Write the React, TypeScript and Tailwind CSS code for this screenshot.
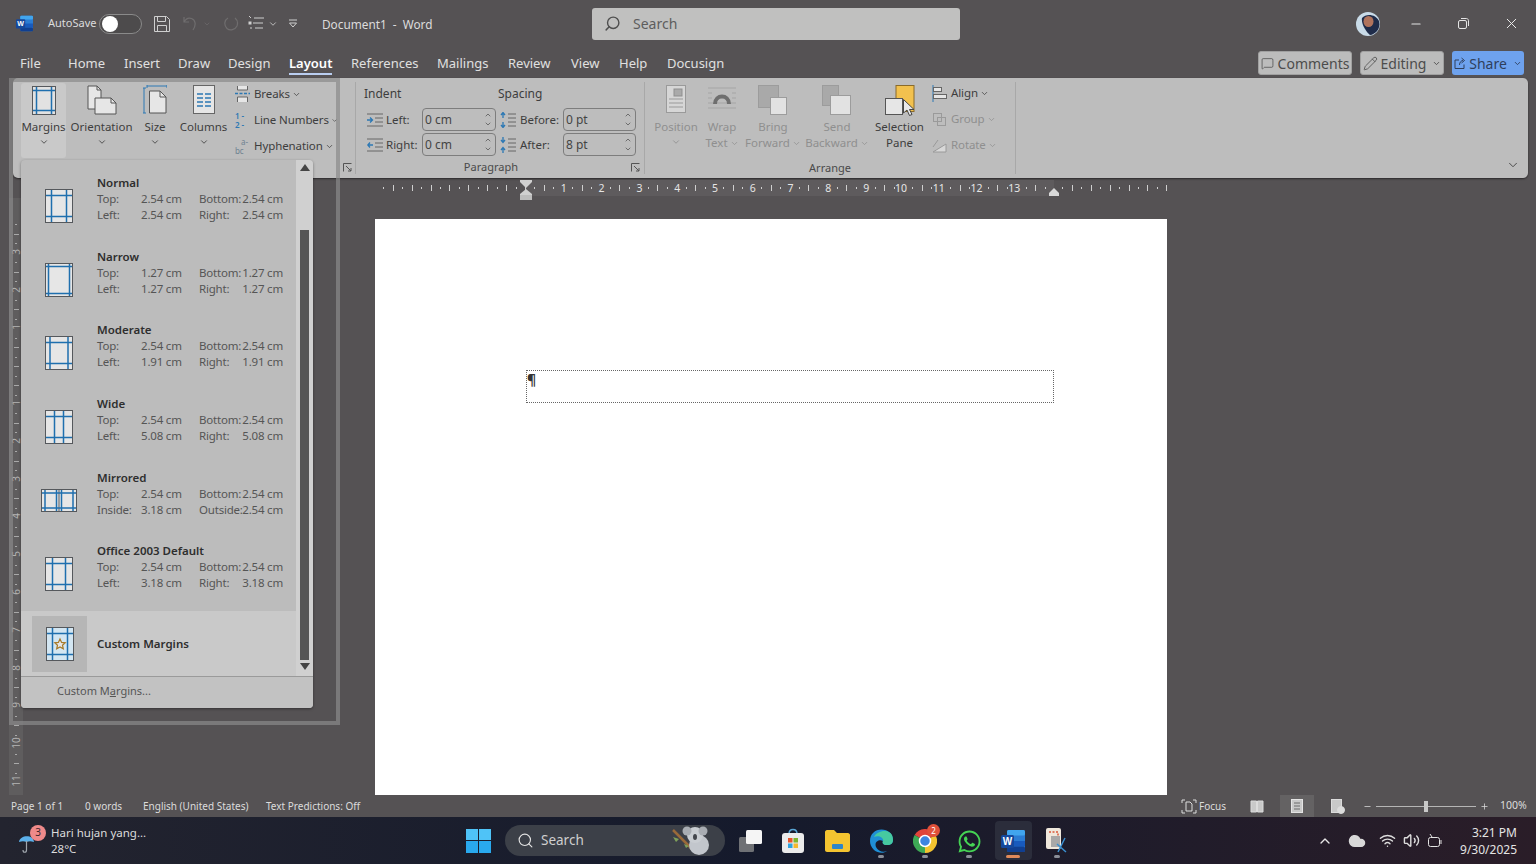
import {
  ChevronDown,
  ChevronUp,
  Minus,
  Plus,
  X,
  Search,
  MessageSquare,
  Pencil,
  Wifi,
  Volume2,
  Cloud,
} from 'lucide-react';
import { FaWhatsapp } from 'react-icons/fa';

const tabs = [
  { label: 'File', w: 'w-[48px]' },
  { label: 'Home', w: 'w-[56px]' },
  { label: 'Insert', w: 'w-[54px]' },
  { label: 'Draw', w: 'w-[50px]' },
  { label: 'Design', w: 'w-[61px]' },
  { label: 'Layout', w: 'w-[62px]' },
  { label: 'References', w: 'w-[86px]' },
  { label: 'Mailings', w: 'w-[71px]' },
  { label: 'Review', w: 'w-[63px]' },
  { label: 'View', w: 'w-[48px]' },
  { label: 'Help', w: 'w-[48px]' },
  { label: 'Docusign', w: 'w-[70px]' },
];

const margins = [
  { name: 'Normal', a: ['Top:', '2.54 cm', 'Bottom:', '2.54 cm'], b: ['Left:', '2.54 cm', 'Right:', '2.54 cm'], x: 6, y: 6 },
  { name: 'Narrow', a: ['Top:', '1.27 cm', 'Bottom:', '1.27 cm'], b: ['Left:', '1.27 cm', 'Right:', '1.27 cm'], x: 3, y: 3 },
  { name: 'Moderate', a: ['Top:', '2.54 cm', 'Bottom:', '2.54 cm'], b: ['Left:', '1.91 cm', 'Right:', '1.91 cm'], x: 4.5, y: 6 },
  { name: 'Wide', a: ['Top:', '2.54 cm', 'Bottom:', '2.54 cm'], b: ['Left:', '5.08 cm', 'Right:', '5.08 cm'], x: 9, y: 6 },
  { name: 'Mirrored', a: ['Top:', '2.54 cm', 'Bottom:', '2.54 cm'], b: ['Inside:', '3.18 cm', 'Outside:', '2.54 cm'], x: 0, y: 0 },
  { name: 'Office 2003 Default', a: ['Top:', '2.54 cm', 'Bottom:', '2.54 cm'], b: ['Left:', '3.18 cm', 'Right:', '3.18 cm'], x: 7, y: 6 },
];

function MarginIcon({ x, y, star }: { x: number; y: number; star?: boolean }) {
  return (
    <svg width="28" height="34" viewBox="0 0 28 34" fill="none">
      <rect x="0.5" y="0.5" width="27" height="33" fill={star ? '#d3e6f2' : '#e6e6e6'} stroke="#55585c" />
      <path d={`M${x + 0.5} 1V33M${27.5 - x} 1V33M1 ${y + 0.5}H27M1 ${33.5 - y}H27`} stroke="#1f6fae" strokeWidth="1.5" />
      {star && <path d="M14 12l1.6 3.4 3.6.4-2.7 2.4.8 3.6-3.3-1.9-3.3 1.9.8-3.6-2.7-2.4 3.6-.4z" fill="#e6e6e6" stroke="#a87a28" strokeWidth="1.2" />}
    </svg>
  );
}

function MirroredIcon() {
  return (
    <svg width="36" height="23" viewBox="0 0 36 23" fill="none">
      <rect x="0.5" y="0.5" width="35" height="22" fill="#e6e6e6" stroke="#55585c" />
      <path d="M18 0V23" stroke="#55585c" />
      <path d="M4 1V22M15.5 1V22M20.5 1V22M32 1V22M1 4H35M1 19H35" stroke="#1f6fae" strokeWidth="1.5" />
    </svg>
  );
}

function BigMargins() {
  return (
    <svg width="24" height="29" viewBox="0 0 24 29" fill="none">
      <rect x="0.5" y="0.5" width="23" height="28" fill="#e2e2e2" stroke="#55585c" />
      <path d="M4.5 1V28M19.5 1V28M1 4.5H23M1 24.5H23" stroke="#1f6fae" strokeWidth="1.5" />
    </svg>
  );
}

function OrientationIcon() {
  return (
    <svg width="30" height="30" viewBox="0 0 30 30" fill="none" stroke="#555">
      <path d="M1 1H10L14 5V24H1Z" fill="#e6e6e6" />
      <path d="M10 1V5H14" />
      <path d="M8 13H24L29 18V29H8Z" fill="#e6e6e6" />
      <path d="M24 13V18H29" />
    </svg>
  );
}

function SizeIcon() {
  return (
    <svg width="24" height="30" viewBox="0 0 24 30" fill="none">
      <path d="M1 3V28M0 3H3M0 28H3M4 1H24M4 0V3M24 0V3" stroke="#2c78b4" />
      <path d="M6.5 6H17L23 12V28H6.5Z" fill="#e6e6e6" stroke="#555" />
      <path d="M17 6V12H23" stroke="#555" />
    </svg>
  );
}

function ColumnsIcon() {
  return (
    <svg width="22" height="29" viewBox="0 0 22 29" fill="none">
      <rect x="0.5" y="0.5" width="21" height="28" fill="#e6e6e6" stroke="#666" />
      <path d="M4 9H10M12 9H18M4 13H10M12 13H18M4 17H10M12 17H18M4 21H10M12 21H18" stroke="#2c78b4" strokeWidth="1.3" />
    </svg>
  );
}

function BreaksIcon() {
  return (
    <svg width="15" height="16" viewBox="0 0 15 16" fill="none">
      <path d="M2.5 0V4H12.5V0M2.5 16V11H12.5V16" fill="#e6e6e6" stroke="#666" />
      <path d="M0 7.5H15" stroke="#2c78b4" strokeWidth="1.3" strokeDasharray="3 1.5" />
    </svg>
  );
}

function IndentIcon({ flip, blue = '#2c78b4' }: { flip?: boolean; blue?: string }) {
  return (
    <svg width="16" height="14" viewBox="0 0 16 14" fill="none">
      <path d="M0 1H16M8 5H16M8 9H16M0 13H16" stroke="#666" />
      <path d={flip ? 'M6 7H1M3 4.5L.8 7 3 9.5' : 'M0 7H5M3 4.5L5.5 7 3 9.5'} stroke={blue} strokeWidth="1.3" />
    </svg>
  );
}

function SpacingIcon({ inward }: { inward?: boolean }) {
  return (
    <svg width="16" height="16" viewBox="0 0 16 16" fill="none">
      <path d="M8 2H16M8 6H16M8 10H16M8 14H16" stroke="#666" />
      <path
        d={inward ? 'M3 0V5M1 3L3 5.5 5 3M3 16V11M1 13L3 10.5 5 13' : 'M3 1V6M1 3L3 .5 5 3M3 15V10M1 13L3 15.5 5 13'}
        stroke="#2c78b4"
        strokeWidth="1.3"
      />
    </svg>
  );
}

function Launcher() {
  return (
    <svg width="9" height="9" viewBox="0 0 9 9" fill="none" stroke="#555">
      <path d="M.5 8.5V.5H8.5M3 3L8 8M8 5V8H5" />
    </svg>
  );
}

function Spinner({ value, w }: { value: string; w: string }) {
  return (
    <div className={`flex h-[23px] ${w} shrink-0 items-center justify-between rounded-[4px] border border-[#7d7d7d] pl-[2px] pr-[3px] text-[12px] text-[#444]`}>
      <span>{value}</span>
      <span className="flex flex-col">
        <ChevronUp size={8} strokeWidth={2} />
        <ChevronDown size={8} strokeWidth={2} className="mt-[1px]" />
      </span>
    </div>
  );
}

function RibbonButton({
  icon,
  lines,
  w,
  off,
  chevronInline,
  noChevron,
  className = '',
}: {
  icon: React.ReactNode;
  lines: string[];
  w: string;
  off?: boolean;
  chevronInline?: boolean;
  noChevron?: boolean;
  className?: string;
}) {
  return (
    <div className={`flex ${w} shrink-0 flex-col items-center ${off ? 'text-[#8f8f8f]' : 'text-[#3d3d3d]'} ${className}`}>
      <div className="flex h-[34px] items-start justify-center">{icon}</div>
      {lines.map((line, i) => (
        <div key={line} className="flex h-[16px] items-center whitespace-nowrap text-[11.5px] leading-[16px]">
          {line}
          {chevronInline && i === lines.length - 1 && <ChevronDown size={9} strokeWidth={2} className="ml-[2px]" />}
        </div>
      ))}
      {!chevronInline && !noChevron && <ChevronDown size={10} strokeWidth={2} className="mt-[2px]" />}
    </div>
  );
}

function SideRow({ icon, label, off }: { icon: React.ReactNode; label: string; off?: boolean }) {
  return (
    <div className={`flex h-[26px] items-center whitespace-nowrap text-[11.5px] tracking-[-0.1px] ${off ? 'text-[#8f8f8f]' : 'text-[#3d3d3d]'}`}>
      <span className="flex w-[19px] shrink-0 items-center">{icon}</span>
      {label}
      <ChevronDown size={9} strokeWidth={2} className="ml-[2px]" />
    </div>
  );
}

function RulerCell({ n }: { n?: number }) {
  return (
    <div className="grid w-[37.8px] shrink-0 grid-cols-4 items-center justify-items-end">
      <span className="h-[2px] w-[1px] bg-[#cfcfcf]" />
      <span className="h-[6px] w-[1px] bg-[#cfcfcf]" />
      <span className="h-[2px] w-[1px] bg-[#cfcfcf]" />
      {n ? (
        <span className="translate-x-[3px] text-[10.5px] leading-none text-[#e6e6e6]">{n}</span>
      ) : (
        <span className="h-[6px] w-[1px] bg-[#cfcfcf]" />
      )}
    </div>
  );
}

function VRulerCell({ n }: { n?: number }) {
  return (
    <div className="grid h-[37.8px] shrink-0 grid-rows-4 items-end justify-items-center">
      <span className="h-[1px] w-[2px] bg-[#a9a9a9]" />
      <span className="h-[1px] w-[5px] bg-[#a9a9a9]" />
      <span className="h-[1px] w-[2px] bg-[#a9a9a9]" />
      {n ? (
        <span className="translate-y-[3px] -rotate-90 text-[10px] leading-none text-[#b5b5b5]">{n}</span>
      ) : (
        <span className="h-[1px] w-[5px] bg-[#a9a9a9]" />
      )}
    </div>
  );
}

function WordIcon({ size }: { size: number }) {
  return (
    <svg width={size} height={size} viewBox="0 0 24 24">
      <rect x="6" y="1" width="18" height="22" rx="2" fill="#2b7cd3" />
      <rect x="6" y="1" width="18" height="5.5" rx="1.5" fill="#41a5ee" />
      <rect x="6" y="12" width="18" height="5.5" fill="#185abd" />
      <rect x="6" y="17.5" width="18" height="5.5" rx="1.5" fill="#103f91" />
      <rect x="0" y="6" width="13" height="13" rx="1.5" fill="#15489c" />
      <text x="6.5" y="16" textAnchor="middle" fontSize="10" fontWeight="700" fill="#fff" fontFamily="Liberation Sans, sans-serif">
        W
      </text>
    </svg>
  );
}

function TaskSlot({ children, active, dot }: { children: React.ReactNode; active?: boolean; dot?: boolean }) {
  return (
    <div className="flex h-[47px] w-[44px] shrink-0 justify-center pt-[4px]">
      <div className={`flex h-[39px] w-[37px] flex-col items-center rounded-[4px] pt-[8px] ${active ? 'bg-[#2b2d3b]' : ''}`}>
        <div className="flex h-[24px] items-center justify-center">{children}</div>
        {dot && <span className={`mt-[2px] h-[3px] rounded-full ${active ? 'w-[14px] bg-[#e08a5a]' : 'w-[6px] bg-[#8b8f99]'}`} />}
      </div>
    </div>
  );
}

export default function App() {
  return (
    <div className="relative flex h-[864px] w-[1536px] flex-col overflow-hidden bg-[#555254] font-['Noto_Sans',sans-serif] text-[12px]">
      {/* Title bar */}
      <div className="flex h-[47px] shrink-0 items-center text-[#dcdcdc]">
        <div className="ml-[16px]">
          <WordIcon size={17} />
        </div>
        <span className="ml-[15px] w-[51px] text-[11px]">AutoSave</span>
        <div className="flex h-[20px] w-[43px] items-center rounded-full border border-[#8a8a8a] bg-[#4d4b4c] pl-[2px]">
          <span className="h-[16px] w-[16px] rounded-full bg-white" />
        </div>
        <svg className="ml-[12px]" width="16" height="16" viewBox="0 0 16 16" fill="none" stroke="#cfcfcf">
          <path d="M.5.5H12.5L15.5 3.5V15.5H.5Z" />
          <path d="M3.5.5V5.5H11.5V.5M3.5 15.5V9.5H12.5V15.5" />
        </svg>
        <svg className="ml-[13px]" width="15" height="15" viewBox="0 0 15 15" fill="none" stroke="#6f6d6e" strokeWidth="1.2">
          <path d="M1 1V6H6M1 6C3 2.5 6 1.5 8.5 2.5C12.5 4 13.5 9 10 14" />
        </svg>
        <ChevronDown size={8} className="ml-[5px] text-[#6f6d6e]" />
        <svg className="ml-[12px]" width="16" height="15" viewBox="0 0 16 15" fill="none" stroke="#6f6d6e" strokeWidth="1.2">
          <path d="M5 2C1.5 4 .5 9 4 12.5C7 15 12 14 14 10C15 7 14.5 4 12 2" />
        </svg>
        <svg className="ml-[9px]" width="16" height="17" viewBox="0 0 16 17" fill="none" stroke="#cfcfcf">
          <path d="M1 1L3 3M6 3H16M5 8H15M7 13H15" />
          <rect x="1" y="7" width="2" height="2" fill="#cfcfcf" />
          <path d="M2 13H4" />
        </svg>
        <ChevronDown size={10} strokeWidth={2} className="ml-[4px] text-[#cfcfcf]" />
        <svg className="ml-[10px]" width="10" height="9" viewBox="0 0 10 9" fill="none" stroke="#cfcfcf">
          <path d="M1 1H9M1.5 4L5 8 8.5 4Z" />
        </svg>
        <span className="ml-[24px] mt-[2px] w-[270px] text-[11.8px]">Document1&nbsp; -&nbsp; Word</span>
        <div className="flex h-[32px] w-[368px] items-center rounded-[3px] bg-[#c0c0bf] pl-[12px] text-[14px] text-[#5d5d5d]">
          <Search size={17} className="-scale-x-100 text-[#4e4e4e]" />
          <span className="ml-[12px]">Search</span>
        </div>
        <svg className="ml-[396px]" width="24" height="24" viewBox="0 0 24 24">
          <circle cx="12" cy="12" r="12" fill="#c9dbe8" />
          <path d="M6 6C10 1 20 2 23 9C25 16 20 22 14 23C10 20 5 12 6 6Z" fill="#1f2c4a" />
          <ellipse cx="12.5" cy="9.5" rx="5" ry="5.5" fill="#b0735c" />
        </svg>
        <Minus size={14} className="ml-[29px] text-[#e4e4e4]" />
        <svg className="ml-[35px]" width="11" height="11" viewBox="0 0 11 11" fill="none" stroke="#e4e4e4">
          <rect x=".5" y="2.5" width="8" height="8" rx="1.5" />
          <path d="M3 .5H8.5C9.5.5 10.5 1.5 10.5 2.5V8" />
        </svg>
        <X size={17} strokeWidth={1.4} className="ml-[34px] text-[#ececec]" />
      </div>

      {/* Tabs */}
      <div className="flex h-[31px] shrink-0 items-start text-[13px] text-[#e0e0e0]">
        <div className="flex pl-[20px]">
          {tabs.map((t) => (
            <div key={t.label} className={`${t.w} h-[31px] pt-[7px] leading-[19px]`}>
              <span className={t.label === 'Layout' ? 'inline-block border-b-2 border-[#b9cdf0] font-semibold text-white' : ''}>{t.label}</span>
            </div>
          ))}
        </div>
        <div className="ml-auto mr-[12px] mt-[4px] flex gap-[8px] text-[14px] text-[#4c4c4c]">
          <div className="flex h-[24px] w-[94px] items-center justify-center gap-[4px] rounded-[3px] border border-[#a0a0a0] bg-[#bcbcbc]">
            <MessageSquare size={13} strokeWidth={1.4} />
            Comments
          </div>
          <div className="flex h-[24px] w-[84px] items-center justify-center gap-[3px] rounded-[3px] border border-[#a0a0a0] bg-[#bcbcbc]">
            <Pencil size={15} strokeWidth={1.3} />
            Editing
            <ChevronDown size={9} strokeWidth={2.4} className="ml-[3px]" />
          </div>
          <div className="flex h-[24px] w-[72px] items-center justify-center gap-[3px] rounded-[3px] bg-[#6ea2ee] text-[#2f3f5c]">
            <svg width="12" height="12" viewBox="0 0 12 12" fill="none" stroke="#2f3f5c">
              <path d="M5 3H1V11.5H10V7.5M5.5 8C5.5 5 7.5 3.5 9 3.5M7.5 1L10.5 3.5 7.5 6" />
            </svg>
            Share
            <ChevronDown size={9} strokeWidth={2.4} className="ml-[3px]" />
          </div>
        </div>
      </div>

      {/* Ribbon */}
      <div className="ml-[13px] flex h-[100px] w-[1515px] shrink-0 rounded-[5px] bg-[#bdbdbd] shadow-[0_1px_2px_rgba(0,0,0,0.5)]">
        {/* Page Setup */}
        <div className="flex h-full w-[342px] shrink-0 pl-[8px] pt-[5px]">
          <div className="flex h-[75px] w-[45px] shrink-0 flex-col items-center rounded-[3px] bg-[#c9c9c9] pt-[3px] text-[#3d3d3d]">
            <div className="flex h-[33px] items-start">
              <BigMargins />
            </div>
            <div className="flex h-[16px] items-center text-[11.5px]">Margins</div>
            <ChevronDown size={10} strokeWidth={2} className="mt-[2px]" />
          </div>
          <div className="-mt-[5px] flex pt-[7px]">
            <RibbonButton w="w-[61px]" className="ml-[5px]" icon={<OrientationIcon />} lines={['Orientation']} />
            <RibbonButton w="w-[36px]" className="ml-[5px]" icon={<SizeIcon />} lines={['Size']} />
            <RibbonButton w="w-[51px]" className="ml-[5px]" icon={<ColumnsIcon />} lines={['Columns']} />
          </div>
          <div className="-mt-[2px] ml-[6px] flex w-[103px] shrink-0 flex-col">
            <SideRow icon={<BreaksIcon />} label="Breaks" />
            <SideRow
              icon={
                <span className="flex flex-col text-[8px] font-semibold leading-[9px] text-[#2c78b4]">
                  <span>1 -</span>
                  <span>2 -</span>
                </span>
              }
              label="Line Numbers"
            />
            <SideRow
              icon={
                <span className="flex flex-col text-[8px] leading-[9px] text-[#6f8291]">
                  <span className="pl-[6px]">a-</span>
                  <span>bc</span>
                </span>
              }
              label="Hyphenation"
            />
          </div>
          <div className="ml-auto self-end pb-[6px] pr-[3px]">
            <Launcher />
          </div>
        </div>

        {/* Paragraph */}
        <div className="my-[4px] h-[92px] w-[290px] shrink-0 border-x border-[#a8a8a8] pl-[8px] pt-[4px] text-[#3d3d3d]">
          <div className="flex h-[16px] items-center text-[12px]">
            <span className="w-[134px]">Indent</span>
            <span>Spacing</span>
          </div>
          <div className="mt-[6px] flex h-[23px] items-center">
            <span className="ml-[3px] flex w-[19px] shrink-0">
              <IndentIcon />
            </span>
            <span className="w-[36px] shrink-0 text-[11.5px]">Left:</span>
            <Spinner value="0 cm" w="w-[74px]" />
            <span className="ml-[4px] flex w-[20px] shrink-0">
              <SpacingIcon />
            </span>
            <span className="w-[43px] shrink-0 text-[11.5px]">Before:</span>
            <Spinner value="0 pt" w="w-[73px]" />
          </div>
          <div className="mt-[2px] flex h-[23px] items-center">
            <span className="ml-[3px] flex w-[19px] shrink-0">
              <IndentIcon flip />
            </span>
            <span className="w-[36px] shrink-0 text-[11.5px]">Right:</span>
            <Spinner value="0 cm" w="w-[74px]" />
            <span className="ml-[4px] flex w-[20px] shrink-0">
              <SpacingIcon inward />
            </span>
            <span className="w-[43px] shrink-0 text-[11.5px]">After:</span>
            <Spinner value="8 pt" w="w-[73px]" />
          </div>
          <div className="mt-[3px] flex h-[16px] items-center justify-end pr-[4px] text-[11px] text-[#4a4a4a]">
            <span className="mr-[113px]">Paragraph</span>
            <Launcher />
          </div>
        </div>

        {/* Arrange */}
        <div className="my-[4px] flex h-[92px] w-[371px] shrink-0 flex-col border-r border-[#a8a8a8]">
          <div className="flex h-[80px] pl-[10px] pt-[3px]">
            <RibbonButton
              w="w-[42px]"
              off
              icon={
                <svg width="20" height="28" viewBox="0 0 20 28" fill="none">
                  <rect x=".5" y=".5" width="19" height="27" fill="#d6d6d6" stroke="#9a9a9a" />
                  <rect x="8" y="4" width="8" height="7" fill="#aaa" stroke="#8f8f8f" />
                  <path d="M3 14H17M3 18H17M3 22H17" stroke="#9a9a9a" />
                </svg>
              }
              lines={['Position']}
            />
            <RibbonButton
              w="w-[46px]"
              className="ml-[2px]"
              off
              chevronInline
              icon={
                <svg width="30" height="28" viewBox="0 0 30 28" fill="none">
                  <path d="M1 3H29M1 8H5M25 8H29M1 13H5M25 13H29M1 18H29M1 23H29" stroke="#a5a5a5" />
                  <path d="M8 19C8 9 22 9 22 19" stroke="#6f6f6f" strokeWidth="4" />
                </svg>
              }
              lines={['Wrap', 'Text']}
            />
            <RibbonButton
              w="w-[56px]"
              off
              chevronInline
              icon={
                <svg width="30" height="30" viewBox="0 0 30 30" fill="none">
                  <rect x=".5" y=".5" width="20" height="22" fill="#a9a9a9" stroke="#9c9c9c" />
                  <rect x="12.5" y="12.5" width="16" height="17" fill="#e2e2e2" stroke="#9c9c9c" />
                </svg>
              }
              lines={['Bring', 'Forward']}
            />
            <RibbonButton
              w="w-[64px]"
              className="ml-[4px]"
              off
              chevronInline
              icon={
                <svg width="30" height="30" viewBox="0 0 30 30" fill="none">
                  <rect x=".5" y=".5" width="16" height="20" fill="#a9a9a9" stroke="#9c9c9c" />
                  <rect x="8.5" y="10.5" width="20" height="19" fill="#e2e2e2" stroke="#9c9c9c" />
                </svg>
              }
              lines={['Send', 'Backward']}
            />
            <RibbonButton
              w="w-[53px]"
              className="ml-[4px]"
              noChevron
              icon={
                <svg width="30" height="30" viewBox="0 0 30 30" fill="none">
                  <rect x="11" y=".5" width="18" height="26" fill="#f2c14e" stroke="#8a6b2a" />
                  <rect x=".5" y="13.5" width="17" height="16" fill="#e6e6e6" stroke="#555" />
                </svg>
              }
              lines={['Selection', 'Pane']}
            />
            <div className="-mt-[5px] ml-[6px] flex flex-col">
              <SideRow
                icon={
                  <svg width="15" height="17" viewBox="0 0 15 17" fill="none">
                    <path d="M1 0V17" stroke="#2c78b4" />
                    <rect x="1.5" y="2.5" width="8" height="4" fill="#e6e6e6" stroke="#666" />
                    <rect x="1.5" y="9.5" width="13" height="4" fill="#e6e6e6" stroke="#666" />
                  </svg>
                }
                label="Align"
              />
              <SideRow
                off
                icon={
                  <svg width="15" height="15" viewBox="0 0 15 15" fill="none" stroke="#9a9a9a">
                    <rect x="1.5" y="1.5" width="8" height="8" />
                    <rect x="5.5" y="5.5" width="8" height="8" />
                  </svg>
                }
                label="Group"
              />
              <SideRow
                off
                icon={
                  <svg width="15" height="15" viewBox="0 0 15 15" fill="#d8d8d8" stroke="#9a9a9a">
                    <path d="M1 14L14 6V14Z" />
                    <path d="M1 9L6 2" fill="none" />
                  </svg>
                }
                label="Rotate"
              />
            </div>
          </div>
          <div className="flex h-[12px] items-center justify-center text-[11px] text-[#4a4a4a]">Arrange</div>
        </div>

        <div className="ml-auto self-end pb-[6px] pr-[8px]">
          <ChevronDown size={14} strokeWidth={1.6} className="text-[#444]" />
        </div>
      </div>

      {/* Horizontal ruler */}
      <div className="relative ml-[375px] flex h-[20px] w-[792px] shrink-0 items-center">
        <div className="flex w-[151px] shrink-0 justify-end overflow-hidden">
          <RulerCell />
          <RulerCell />
          <RulerCell />
          <RulerCell />
        </div>
        <div className="flex h-[16px] w-[528px] shrink-0 items-center overflow-hidden bg-[#5e5b5d]">
          {[1, 2, 3, 4, 5, 6, 7, 8, 9, 10, 11, 12, 13].map((n) => (
            <RulerCell key={n} n={n} />
          ))}
          <RulerCell />
        </div>
        <div className="flex w-[113px] shrink-0">
          <RulerCell />
          <RulerCell />
          <RulerCell />
        </div>
        <svg className="absolute left-[145px] top-[2px]" width="12" height="20" viewBox="0 0 12 20" fill="#d0d0d0">
          <path d="M0 0H12V2L6 8L0 2Z" />
          <path d="M6 9L12 14V15H0V14Z" />
          <rect y="15" width="12" height="5" fill="#bdbdbd" />
        </svg>
        <svg className="absolute left-[674px] top-[10px]" width="10" height="8" viewBox="0 0 10 8" fill="#d8d8d8">
          <path d="M5 0L10 5V8H0V5Z" />
        </svg>
      </div>

      {/* Document area */}
      <div className="flex h-[597px] shrink-0">
        <div className="ml-[9px] flex h-[597px] w-[14px] shrink-0 flex-col overflow-hidden bg-[#5f5d5e] pt-[18px]">
          {[3, 2, 1, 0, 1, 2, 3, 4, 5, 6, 7, 8, 9, 10, 11].map((n, i) => (
            <VRulerCell key={i} n={n || undefined} />
          ))}
        </div>
        <div className="ml-[352px] mt-[21px] h-[576px] w-[792px] shrink-0 bg-white pl-[151px] pt-[151px]">
          <div className="h-[33px] w-[528px] border border-dotted border-[#666] text-[14px] font-bold leading-[18px] text-[#333]">¶</div>
        </div>
      </div>

      {/* Status bar */}
      <div className="flex h-[22px] shrink-0 items-center text-[10px] text-[#dcdcdc]">
        <span className="ml-[11px] w-[74px]">Page 1 of 1</span>
        <span className="w-[58px]">0 words</span>
        <span className="w-[123px]">English (United States)</span>
        <span className="w-[110px]">Text Predictions: Off</span>
        <svg className="ml-[805px]" width="16" height="15" viewBox="0 0 16 15" fill="none" stroke="#dcdcdc">
          <path d="M1 4V1H4M12 1H15V4M1 11V14H4M12 14H15V11" />
          <path d="M5 3H9L11 5V12H5Z" />
        </svg>
        <span className="ml-[1px] w-[52px] pl-[1px]">Focus</span>
        <svg width="14" height="13" viewBox="0 0 14 13" fill="#c9c9c9" stroke="#dcdcdc">
          <path d="M1 1H6.5V12H1ZM7.5 1H13V12H7.5Z" />
        </svg>
        <div className="ml-[16px] flex h-[22px] w-[34px] items-center justify-center bg-[#646263]">
          <svg width="12" height="14" viewBox="0 0 12 14" fill="#c9c9c9" stroke="#e4e4e4">
            <rect x=".5" y=".5" width="11" height="13" />
            <path d="M3 4H9M3 7H9M3 10H9" stroke="#6a6a6a" />
          </svg>
        </div>
        <svg className="ml-[16px]" width="15" height="15" viewBox="0 0 15 15" fill="#c9c9c9" stroke="#dcdcdc">
          <rect x="1.5" y=".5" width="10" height="13" />
          <circle cx="11" cy="11" r="3.5" fill="#dcdcdc" />
        </svg>
        <Minus size={9} className="ml-[18px]" />
        <div className="ml-[4px] flex h-[22px] w-[100px] items-center justify-center">
          <div className="relative h-[1px] w-[100px] bg-[#b5b5b5]">
            <span className="absolute left-[48px] top-[-5px] h-[11px] w-[4px] bg-[#c9c9c9]" />
          </div>
        </div>
        <Plus size={9} className="ml-[4px]" />
        <span className="ml-[11px] text-[10.5px]">100%</span>
      </div>

      {/* Taskbar */}
      <div className="flex h-[47px] shrink-0 items-center bg-gradient-to-r from-[#23242f] via-[#151a2c] to-[#2a1d28] text-[#dcdcdc]">
        <div className="flex w-[466px] shrink-0 items-center pl-[19px]">
          <svg className="mt-[6px] shrink-0" width="15" height="21" viewBox="0 0 15 21" fill="none">
            <path d="M0 9C1 2 14 1 15 9C12 8 10 8 7.5 9C5 8 3 8 0 9Z" fill="#5bb0ea" />
            <path d="M7.5 8V17C7.5 20 4 20 4 17" stroke="#a0a6ad" strokeWidth="1.2" />
          </svg>
          <span className="-ml-[4px] -mt-[16px] flex h-[16px] w-[16px] shrink-0 items-center justify-center rounded-full bg-[#ef8a8a] text-[10px] text-[#40252a]">3</span>
          <div className="ml-[5px] flex flex-col text-[11.5px] leading-[16px]">
            <span>Hari hujan yang...</span>
            <span>28°C</span>
          </div>
        </div>
        <div className="grid h-[24px] w-[25px] shrink-0 grid-cols-2 gap-[1.5px]">
          <span className="bg-[#4fc3f7]" />
          <span className="bg-[#4fc3f7]" />
          <span className="bg-[#29a9ee]" />
          <span className="bg-[#29a9ee]" />
        </div>
        <div className="ml-[14px] flex h-[31px] w-[220px] shrink-0 items-center rounded-full bg-[#3c4048] pl-[12px] text-[13.5px] text-[#cfcfcf]">
          <Search size={17} strokeWidth={1.6} className="text-[#e4e4e4]" />
          <span className="ml-[7px]">Search</span>
          <svg className="ml-auto mr-[11px]" width="42" height="30" viewBox="0 0 42 30" fill="none">
            <path d="M1 4L24 27" stroke="#9a6a3a" strokeWidth="2.5" />
            <path d="M1 11l6 2-3 3zM12 18l5 2-3 2z" fill="#7fa05a" />
            <ellipse cx="27" cy="19" rx="10" ry="10" fill="#c2c6cc" />
            <circle cx="23" cy="9" r="8" fill="#c9cdd2" />
            <circle cx="15" cy="5" r="4.5" fill="#a9adb3" />
            <circle cx="31" cy="5" r="4.5" fill="#a9adb3" />
            <ellipse cx="23" cy="11" rx="2" ry="3" fill="#43464c" />
          </svg>
        </div>
        <div className="flex w-[46px] shrink-0 justify-center pl-[4px]">
          <svg width="23" height="22" viewBox="0 0 23 22">
            <rect x="0" y="7" width="15" height="15" rx="1.5" fill="#6f7175" />
            <rect x="7" y="0" width="16" height="14" rx="1.5" fill="#f5f5f5" />
          </svg>
        </div>
        <TaskSlot>
          <svg width="24" height="26" viewBox="0 0 24 26">
            <path d="M8 6C8 0 16 0 16 6" fill="none" stroke="#5aa6d6" strokeWidth="1.5" />
            <rect x="1" y="5" width="22" height="20" rx="3" fill="#ebebeb" />
            <rect x="7" y="10" width="4.5" height="4.5" fill="#e8542a" />
            <rect x="12.5" y="10" width="4.5" height="4.5" fill="#7db52f" />
            <rect x="7" y="15.5" width="4.5" height="4.5" fill="#2ea3e0" />
            <rect x="12.5" y="15.5" width="4.5" height="4.5" fill="#f5b82e" />
          </svg>
        </TaskSlot>
        <TaskSlot>
          <svg width="25" height="22" viewBox="0 0 25 22">
            <path d="M0 2C0 1 1 0 2 0H9L12 3H23C24 3 25 4 25 5V20C25 21 24 22 23 22H2C1 22 0 21 0 20Z" fill="#f4c430" />
            <rect x="7" y="14" width="11" height="5" rx="1" fill="#2e86c9" />
          </svg>
        </TaskSlot>
        <TaskSlot dot>
          <svg width="24" height="24" viewBox="0 0 24 24">
            <path d="M1 12C1 5 6 .5 12.5 .5C19 .5 24 5 24 11C24 14 22 16 18 16C14 16 13 14 14 12C10 10 5 13 7 18C9 22 14 24 18 22C15 24.5 9 24.5 5 21C2 18 1 15 1 12Z" fill="#1f8fd6" />
            <path d="M24 11C24 14 22 16 18 16C14 16 13 14 14 12C15 9 10 5.5 5 8C8 1 24 -2 24 11Z" fill="#46c9a0" />
          </svg>
        </TaskSlot>
        <TaskSlot dot>
          <div className="relative">
            <svg width="24" height="24" viewBox="0 0 24 24">
              <path d="M12 12L1.6 6A12 12 0 0 1 22.4 6Z" fill="#e0443a" />
              <path d="M12 12L22.4 6A12 12 0 0 1 12 24Z" fill="#f4c430" />
              <path d="M12 12L12 24A12 12 0 0 1 1.6 6Z" fill="#3da955" />
              <circle cx="12" cy="12" r="5.5" fill="#3d85e0" stroke="#fff" strokeWidth="1.5" />
            </svg>
            <span className="absolute -right-[3px] -top-[5px] flex h-[13px] w-[13px] items-center justify-center rounded-full bg-[#e0503a] text-[8px] text-white">2</span>
          </div>
        </TaskSlot>
        <TaskSlot dot>
          <FaWhatsapp size={25} className="text-[#45d354]" />
        </TaskSlot>
        <TaskSlot active dot>
          <WordIcon size={24} />
        </TaskSlot>
        <TaskSlot dot>
          <svg width="24" height="26" viewBox="0 0 24 26">
            <rect x="1" y="0" width="15" height="21" rx="2" fill="#efe7dc" />
            <path d="M4 4H13V17" fill="none" stroke="#d9583a" strokeWidth="1.5" strokeDasharray="2 1.5" />
            <rect x="6" y="8" width="9" height="11" fill="#a8a8a8" />
            <path d="M20 10L13 24M12 16L21 24" stroke="#3a8fd0" strokeWidth="1.5" />
          </svg>
        </TaskSlot>
        <div className="ml-[238px] flex items-center">
          <ChevronUp size={16} strokeWidth={2} className="text-[#e8e8e8]" />
          <Cloud size={18} fill="#d8d8d8" className="ml-[15px] text-[#d8d8d8]" />
          <Wifi size={17} className="ml-[13px]" />
          <Volume2 size={17} className="ml-[7px]" />
          <svg className="ml-[7px]" width="16" height="16" viewBox="0 0 16 16" fill="none" stroke="#e4e4e4">
            <rect x="1.5" y="4.5" width="11" height="9" rx="2" />
            <path d="M14 7V11M3 1L5 4" />
          </svg>
        </div>
        <div className="ml-auto flex flex-col items-end pr-[19px] text-[12px] leading-[17px] text-[#e4e4e4]">
          <span>3:21 PM</span>
          <span>9/30/2025</span>
        </div>
      </div>

      {/* Margins menu */}
      <div className="absolute left-[21px] top-[160px] flex h-[548px] w-[292px] flex-col overflow-hidden rounded-[4px] bg-[#bcbcbc] shadow-[0_1px_3px_rgba(0,0,0,0.4)]">
        <div className="flex h-[516px]">
          <div className="w-[275px] pt-[2px]">
            {margins.map((m) => (
              <div key={m.name} className="flex h-[73.7px] items-center">
                <div className="mt-[14px] flex w-[76px] shrink-0 justify-center">
                  {m.name === 'Mirrored' ? <MirroredIcon /> : <MarginIcon x={m.x} y={m.y} />}
                </div>
                <div className="flex flex-col leading-[16px]">
                  <div className="text-[11.5px] font-semibold text-[#2e2e2e]">{m.name}</div>
                  {[m.a, m.b].map((row) => (
                    <div key={row[0]} className="grid grid-cols-[44px_58px_43px_41px] whitespace-nowrap text-[11.5px] tracking-[-0.2px] text-[#555]">
                      <span>{row[0]}</span>
                      <span>{row[1]}</span>
                      <span>{row[2]}</span>
                      <span className="text-right">{row[3]}</span>
                    </div>
                  ))}
                </div>
              </div>
            ))}
            <div className="mt-[7px] flex h-[65px] items-center bg-[#c9c9c9]">
              <div className="ml-[11px] flex h-[56px] w-[55px] items-center justify-center bg-[#b6b6b6]">
                <MarginIcon x={6} y={6} star />
              </div>
              <span className="ml-[10px] text-[11.5px] font-semibold text-[#2e2e2e]">Custom Margins</span>
            </div>
          </div>
          <div className="flex w-[17px] flex-col items-center bg-[#d0d0d0] pt-[4px]">
            <span className="h-0 w-0 border-x-[5px] border-b-[7px] border-x-transparent border-b-[#444]" />
            <div className="mt-[59px] h-[430px] w-[9px] bg-[#555]" />
            <span className="mt-[3px] h-0 w-0 border-x-[5px] border-t-[7px] border-x-transparent border-t-[#444]" />
          </div>
        </div>
        <div className="flex h-[32px] items-center border-t border-[#9a9a9a] bg-[#c2c2c2] pb-[2px] pl-[36px] text-[11px] text-[#555]">
          <span>
            Custom M<span className="underline">a</span>rgins...
          </span>
        </div>
      </div>

      {/* Selection frame left behind the menu */}
      <div className="pointer-events-none absolute left-[9px] top-[78px] h-[647px] w-[331px] border-[4px] border-[#8a8a8a]/70" />

      {/* Mouse pointer */}
      <svg className="pointer-events-none absolute left-[903px] top-[99px]" width="12" height="18" viewBox="0 0 12 18">
        <path d="M.5.5V14L4 11L6.5 16.5L9 15.5L6.5 10.5H11Z" fill="#e8e8e8" stroke="#444" />
      </svg>
    </div>
  );
}
